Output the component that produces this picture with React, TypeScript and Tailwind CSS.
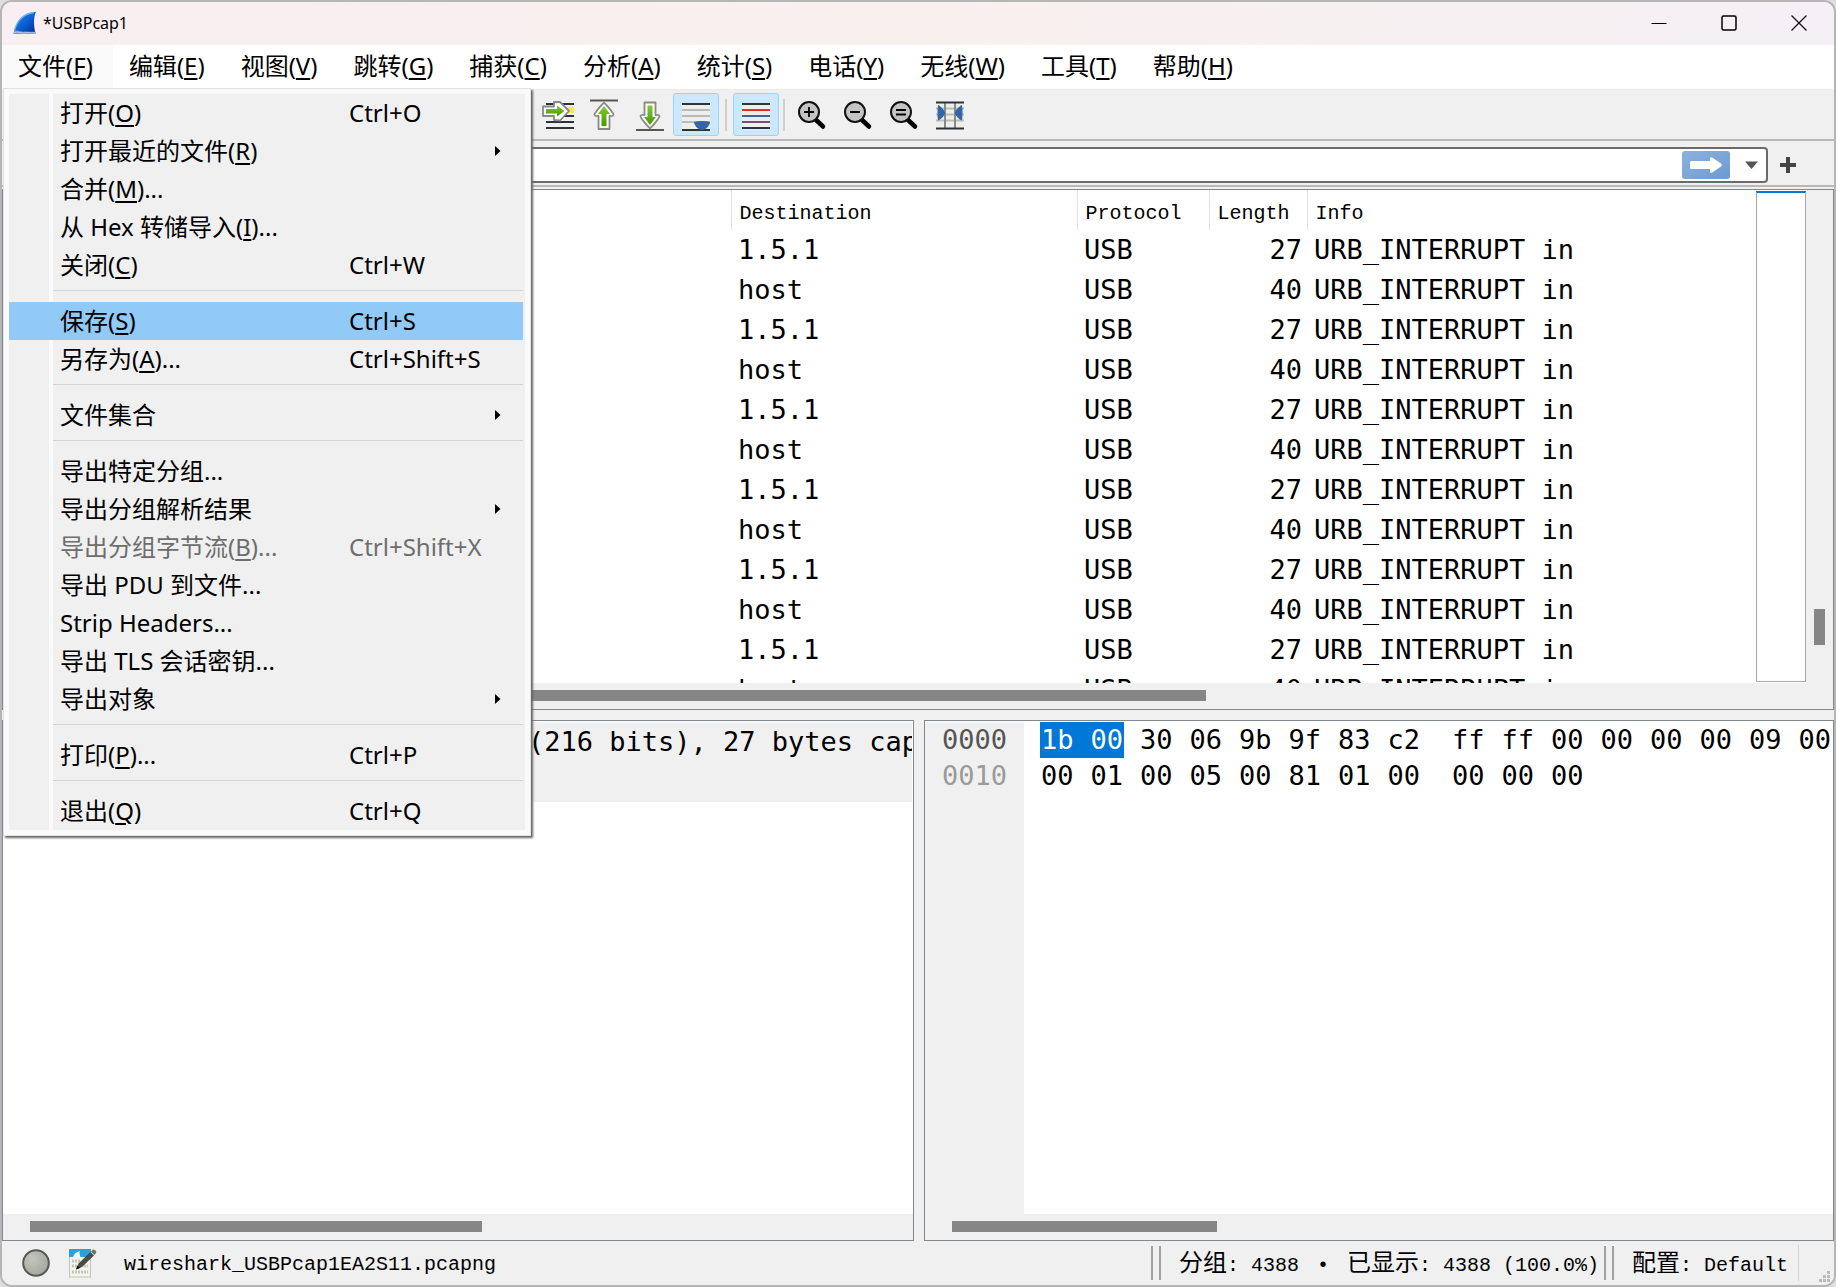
import type { ReactNode } from "react";

type MenuLabel = { text: string; key?: string; tail?: string };
type MenuEntry = MenuLabel & { shortcut?: string; sub?: boolean; disabled?: boolean; active?: boolean };

const menus: MenuLabel[] = [
  { text: "文件", key: "F" },
  { text: "编辑", key: "E" },
  { text: "视图", key: "V" },
  { text: "跳转", key: "G" },
  { text: "捕获", key: "C" },
  { text: "分析", key: "A" },
  { text: "统计", key: "S" },
  { text: "电话", key: "Y" },
  { text: "无线", key: "W" },
  { text: "工具", key: "T" },
  { text: "帮助", key: "H" },
];

const fileMenu: MenuEntry[][] = [
  [
    { text: "打开", key: "O", shortcut: "Ctrl+O" },
    { text: "打开最近的文件", key: "R", sub: true },
    { text: "合并", key: "M", tail: "..." },
    { text: "从 Hex 转储导入", key: "I", tail: "..." },
    { text: "关闭", key: "C", shortcut: "Ctrl+W" },
  ],
  [
    { text: "保存", key: "S", shortcut: "Ctrl+S", active: true },
    { text: "另存为", key: "A", tail: "...", shortcut: "Ctrl+Shift+S" },
  ],
  [{ text: "文件集合", sub: true }],
  [
    { text: "导出特定分组..." },
    { text: "导出分组解析结果", sub: true },
    { text: "导出分组字节流", key: "B", tail: "...", shortcut: "Ctrl+Shift+X", disabled: true },
    { text: "导出 PDU 到文件..." },
    { text: "Strip Headers..." },
    { text: "导出 TLS 会话密钥..." },
    { text: "导出对象", sub: true },
  ],
  [{ text: "打印", key: "P", tail: "...", shortcut: "Ctrl+P" }],
  [{ text: "退出", key: "Q", shortcut: "Ctrl+Q" }],
];

const packets = Array.from({ length: 12 }, (_, i) =>
  i % 2 === 0 ? { dest: "1.5.1", len: 27 } : { dest: "host", len: 40 },
);

const hexRows = [
  { offset: "0000", left: "1b 00 30 06 9b 9f 83 c2", right: "ff ff 00 00 00 00 09 00", selected: 2 },
  { offset: "0010", left: "00 01 00 05 00 81 01 00", right: "00 00 00", selected: 0 },
];

function Label({ text, key_, tail }: { text: string; key_?: string; tail?: string }) {
  return (
    <span className="whitespace-pre">
      {text}
      {key_ && (
        <>
          (<span className="underline decoration-2 underline-offset-[3px]">{key_}</span>)
        </>
      )}
      {tail}
    </span>
  );
}

function TitleBar() {
  return (
    <header className="flex h-[43px] shrink-0 items-center bg-linear-to-r from-[#f9eef1] via-[#f9f0ee] to-[#f5f0f5] pb-[2px] pl-[11px]">
      <svg width="24" height="24" viewBox="0 0 24 24" aria-hidden="true">
        <defs>
          <linearGradient id="fin" x1="0" y1="0" x2="1" y2="1">
            <stop offset="0" stopColor="#3d8fe0" />
            <stop offset="0.5" stopColor="#0c62d6" />
            <stop offset="1" stopColor="#062c8c" />
          </linearGradient>
        </defs>
        <path d="M0.500 22.500C3 11 10 2 23 0.800C20.500 6 20.500 14 22.500 22.500Z" fill="url(#fin)" />
        <path d="M1.500 19.500C4 10 10 2.800 21 1.500" fill="none" stroke="#6fb4f2" strokeWidth="1.300" />
        <path d="M0.500 23L1.300 19.800C5 18.800 8 21.200 12 20.600C16 20 18 21.400 22.300 20.500L22.600 23Z" fill="#6f95d2" />
        <path d="M1 21.500C5 20.300 8 22.400 12 21.800C16 21.200 19 22.400 22.400 21.800" fill="none" stroke="#b5cdf0" />
      </svg>
      <h1 className="ml-[6px] flex-1 text-[16px] leading-6">*USBPcap1</h1>
      <button type="button" aria-label="最小化" className="flex h-full w-[70px] items-center justify-center">
        <svg width="16" height="16" viewBox="0 0 16 16" aria-hidden="true"><path d="M0.500 8.500H15.500" stroke="#000" /></svg>
      </button>
      <button type="button" aria-label="最大化" className="flex h-full w-[70px] items-center justify-center">
        <svg width="16" height="16" viewBox="0 0 16 16" aria-hidden="true"><rect x="1" y="1" width="14" height="14" rx="1.500" fill="none" stroke="#000" strokeWidth="1.500" /></svg>
      </button>
      <button type="button" aria-label="关闭" className="flex h-full w-[70px] items-center justify-center">
        <svg width="16" height="16" viewBox="0 0 16 16" aria-hidden="true"><path d="M0.500 0.500L15.500 15.500M15.500 0.500L0.500 15.500" stroke="#111" strokeWidth="1.300" /></svg>
      </button>
    </header>
  );
}

function FileMenu() {
  return (
    <div className="absolute top-[43px] left-[1px] z-10 w-[528px] border border-[#e2e2e2] bg-[#fafafa] p-[5px] shadow-[2px_2px_2px_#666]">
      <div className="bg-[linear-gradient(to_right,#f0f0f0_0,#f0f0f0_40px,#fafafa_40px,#fafafa_44px,#f0f0f0_44px)]">
        {fileMenu.map((group, g) => (
          <div key={g}>
            {g > 0 && (
              <div className="h-[18px] pt-[6px] pr-[2px] pl-11">
                <hr className="border-[#d5d5d5]" />
              </div>
            )}
            {group.map((e) => (
              <button
                key={e.text}
                type="button"
                disabled={e.disabled}
                className={
                  "grid h-[38px] w-[514px] grid-cols-[289px_1fr_28px] items-center pl-[51px] text-left " +
                  (e.active ? "bg-[#91c9f7]" : e.disabled ? "text-[#6d6d6d]" : "")
                }
              >
                <Label text={e.text} key_={e.key} tail={e.tail} />
                <span>{e.shortcut}</span>
                {e.sub && (
                  <svg width="6" height="10" viewBox="0 0 6 10" aria-hidden="true"><path d="M0 0L5.500 5L0 10Z" fill="#000" /></svg>
                )}
              </button>
            ))}
          </div>
        ))}
      </div>
    </div>
  );
}

function MenuBar() {
  return (
    <nav className="relative flex h-11 shrink-0 bg-white text-[24px] leading-[38px]">
      {menus.map((m, i) => (
        <button key={m.text} type="button" className={"pr-5 pb-[3px] pl-4 " + (i === 0 ? "bg-[#fafafa]" : "")}>
          <Label text={m.text} key_={m.key} />
        </button>
      ))}
      <FileMenu />
    </nav>
  );
}

function Tool({ label, on, children }: { label: string; on?: boolean; children: ReactNode }) {
  return (
    <button
      type="button"
      aria-label={label}
      className={
        "flex h-[43px] w-[46px] items-center justify-center rounded-[3px] border " +
        (on ? "border-[#99d1ff] bg-[#cce8ff]" : "border-transparent")
      }
    >
      <svg width="34" height="34" viewBox="0 0 34 34" aria-hidden="true">{children}</svg>
    </button>
  );
}

function Magnifier({ mark }: { mark: string }) {
  return (
    <>
      <path d="M20 21L28 28.500" stroke="#000" strokeWidth="4.500" strokeLinecap="round" />
      <circle cx="14" cy="14" r="10" fill="#c4c4c4" stroke="#111" strokeWidth="2" />
      <path d={mark} stroke="#000" strokeWidth="1.800" />
    </>
  );
}

function ToolBar() {
  return (
    <div className="flex h-[50px] shrink-0 items-center border-t border-[#ececec] bg-[#f0f0f0] pl-[533px]">
      <svg width="0" height="0" className="absolute" aria-hidden="true">
        <defs>
          <linearGradient id="leaf" x1="0" y1="0" x2="0" y2="1">
            <stop offset="0" stopColor="#82cc2e" />
            <stop offset="1" stopColor="#479a00" />
          </linearGradient>
        </defs>
      </svg>
      <Tool label="转到分组">
        <path d="M5 6H33M5 18H33M5 24H33M5 30H33" stroke="#2e3436" strokeWidth="2" />
        <rect x="22" y="9" width="11" height="6" fill="#fce94f" />
        <path d="M2 8.500H13V4L19 4L28 13L19 22.500L13 22V18H2Z" fill="#fff" stroke="#888a85" strokeWidth="1.800" strokeLinejoin="round" />
        <path d="M5 11H16V7.500L23.500 13L16 18.500V15.500H5Z" fill="url(#leaf)" />
      </Tool>
      <Tool label="首个分组">
        <path d="M3 2.500H31" stroke="#555753" strokeWidth="2" />
        <path d="M17 5C18 5 27 15.500 26.500 17C26 18.500 22.500 18 22.500 18V31H11.500V18C11.500 18 8 18.500 7.500 17C7 15.500 16 5 17 5Z" fill="#fff" stroke="#888a85" strokeWidth="1.800" strokeLinejoin="round" />
        <path d="M17 8L23 16H19.500V28H14.500V16H11Z" fill="url(#leaf)" />
      </Tool>
      <Tool label="最新分组">
        <path d="M3 32H31" stroke="#555753" strokeWidth="2" />
        <path d="M17 30C18 30 27 19.500 26.500 18C26 16.500 22.500 17 22.500 17V4.500H11.500V17C11.500 17 8 16.500 7.500 18C7 19.500 16 30 17 30Z" fill="#fff" stroke="#888a85" strokeWidth="1.800" strokeLinejoin="round" />
        <path d="M17 27L23 19H19.500V7.500H14.500V19H11Z" fill="url(#leaf)" />
      </Tool>
      <Tool label="自动滚动" on>
        <rect x="3" y="6" width="28" height="26" fill="#eeeeec" />
        <path d="M3 6H31M3 32H31" stroke="#2e3436" strokeWidth="2" />
        <path d="M3 12H31M3 18H31M3 24H31" stroke="#babdb6" strokeWidth="2" />
        <path d="M15 24C20 22.500 26 22.500 31 24C31 27 27 32 23 32C19 32 15 27 15 24Z" fill="#3465a4" />
      </Tool>
      <div className="mx-[6px] h-8 w-[2px] bg-[#d0d0d0]" />
      <Tool label="着色" on>
        <rect x="3" y="6" width="28" height="26" fill="#eeeeec" />
        <path d="M3 6H31M3 30H31" stroke="#2e3436" strokeWidth="2" />
        <path d="M3 12H31" stroke="#ef2929" strokeWidth="2" />
        <path d="M3 18H31" stroke="#3465a4" strokeWidth="2" />
        <path d="M3 24H31" stroke="#75507b" strokeWidth="2" />
      </Tool>
      <div className="mx-1 h-8 w-[2px] bg-[#d0d0d0]" />
      <Tool label="放大"><Magnifier mark="M9 14H19M14 9V19" /></Tool>
      <Tool label="缩小"><Magnifier mark="M9 14H19" /></Tool>
      <Tool label="正常大小"><Magnifier mark="M9 12H19M9 16.500H19" /></Tool>
      <Tool label="调整列宽">
        <rect x="3" y="4" width="28" height="27" fill="#eeeeec" />
        <path d="M3 10.500H31M3 16.500H31M3 22.500H31" stroke="#babdb6" strokeWidth="2" />
        <path d="M12 4V31M22 4V31" stroke="#888a85" strokeWidth="2" />
        <path d="M3 4.500H31M3 30.500H31" stroke="#2e3436" strokeWidth="2" />
        <path d="M5 7C8 8 12 13 12 15C12 17 8 21.500 5 22.500C4.300 17 4.300 12 5 7ZM29 7C26 8 22 13 22 15C22 17 26 21.500 29 22.500C29.700 17 29.700 12 29 7Z" fill="#3465a4" />
      </Tool>
    </div>
  );
}

function FilterBar() {
  return (
    <div className="flex h-12 shrink-0 items-center border-t-2 border-b-2 border-[#b8b8b8] bg-[#f0f0f0] pt-[3px] pl-1">
      <div className="flex h-9 min-w-0 flex-1 items-center rounded-[4px] border-2 border-[#6a6a6a] bg-white pr-2">
        <input aria-label="显示过滤器" className="h-full min-w-0 flex-1 px-2 text-[24px] outline-none" />
        <button type="button" aria-label="应用" className="flex h-7 w-12 items-center justify-center rounded-[3px] bg-linear-to-br from-[#8cb2de] to-[#6c9bd0]">
          <svg width="32" height="16" viewBox="0 0 32 16" aria-hidden="true">
            <path d="M1.500 4H20V1.500C20 0 21.500 0 22.500 0.800L31 6.500C32 7.500 32 8.500 31 9.500L22.500 15.200C21.500 16 20 16 20 14.500V12H1.500C0.500 12 0 11.500 0 10.500V5.500C0 4.500 0.500 4 1.500 4Z" fill="#fff" />
          </svg>
        </button>
        <button type="button" aria-label="历史" className="ml-[15px] flex h-7 w-[13px] items-center">
          <svg width="13" height="8" viewBox="0 0 13 8" aria-hidden="true"><path d="M0 0.500H13L6.500 8Z" fill="#555" /></svg>
        </button>
      </div>
      <button type="button" aria-label="添加" className="mr-[38px] ml-3 flex h-7 w-4 items-center">
        <svg width="16" height="16" viewBox="0 0 16 16" aria-hidden="true"><path d="M8 0V16M0 8H16" stroke="#444" strokeWidth="4" /></svg>
      </button>
    </div>
  );
}

function PacketList() {
  const th = "h-10 border-l border-[#e2e2e2] p-0 pt-2 pl-2 text-left font-[Liberation_Mono] text-[20px] leading-8 font-normal";
  return (
    <section className="flex min-h-0 flex-[520] flex-col border border-[#828790] bg-white">
      <div className="flex min-h-0 flex-1">
        <div className="min-w-0 flex-1 overflow-hidden">
          <table className="w-full table-fixed border-collapse font-[DejaVu_Sans_Mono] text-[27px] leading-10">
            <colgroup>
              <col className="w-[728px]" />
              <col className="w-[346px]" />
              <col className="w-[132px]" />
              <col className="w-[98px]" />
              <col />
            </colgroup>
            <thead>
              <tr>
                <td className="h-10 p-0" />
                <th className={th}>Destination</th>
                <th className={th}>Protocol</th>
                <th className={th}>Length</th>
                <th className={th}>Info</th>
              </tr>
            </thead>
            <tbody>
              {packets.map((p, i) => (
                <tr key={i} className="h-10">
                  <td className="p-0" />
                  <td className="p-0 pl-[7px]">{p.dest}</td>
                  <td className="p-0 pl-[7px]">USB</td>
                  <td className="p-0 pr-[5px] text-right">{p.len}</td>
                  <td className="p-0 pl-[7px] whitespace-nowrap">URB_INTERRUPT in</td>
                </tr>
              ))}
            </tbody>
          </table>
        </div>
        <div className="my-px w-[50px] border border-t-2 border-[#a8a8a8] border-t-[#0078d7]" />
        <div className="w-[27px] bg-[#f0f0f0] pt-[419px] pl-[8px]">
          <div className="h-9 w-[11px] bg-[#868686]" />
        </div>
      </div>
      <div className="h-[26px] bg-[#f0f0f0] pt-[7px] pl-[27px]">
        <div className="h-[11px] w-[1176px] bg-[#868686]" />
      </div>
    </section>
  );
}

function DetailPane() {
  return (
    <section className="flex w-[912px] shrink-0 flex-col border border-[#828790] bg-white">
      <div className="mx-px mt-px h-20 overflow-hidden bg-[#f0f0f0] pl-[524px] font-[DejaVu_Sans_Mono] text-[27px] leading-10 whitespace-nowrap">
        (216 bits), 27 bytes cap
      </div>
      <div className="flex-1" />
      <div className="h-[26px] bg-[#f0f0f0] pt-[7px] pl-[27px]">
        <div className="h-[11px] w-[452px] bg-[#868686]" />
      </div>
    </section>
  );
}

function HexPane() {
  return (
    <section className="flex min-w-0 flex-1 flex-col overflow-hidden border border-[#828790] bg-white pt-px font-[DejaVu_Sans_Mono] text-[27px] leading-9">
      <div className="flex flex-1">
        <div className="w-[99px] shrink-0 bg-[#f0f0f0] pl-[17px]">
          {hexRows.map((r, i) => (
            <div key={r.offset} className={i === 0 ? "text-[#555555]" : "text-[#9a9a9a]"}>{r.offset}</div>
          ))}
        </div>
        <div className="pl-4">
          {hexRows.map((r) => (
            <div key={r.offset} className="relative flex gap-4">
              {r.selected > 0 && <div className="absolute top-0 left-0 h-9 w-[84px] bg-[#0078d7]" />}
              <div className="relative grid w-[396px] grid-cols-8">
                {r.left.split(" ").map((b, i) => (
                  <span key={i} className={"pl-px " + (i < r.selected ? "text-white" : "")}>{b}</span>
                ))}
              </div>
              <div className="grid w-[396px] grid-cols-8">
                {r.right.split(" ").map((b, i) => (
                  <span key={i}>{b}</span>
                ))}
              </div>
            </div>
          ))}
        </div>
      </div>
      <div className="h-[26px] bg-[#f0f0f0] pt-[7px] pl-[27px]">
        <div className="h-[11px] w-[265px] bg-[#868686]" />
      </div>
    </section>
  );
}

function StatusBar() {
  const bars = "h-[34px] w-[10px] border-x-2 border-[#a0a0a0]";
  return (
    <footer className="relative flex h-11 shrink-0 items-center bg-[#f0f0f0] pl-5 font-[Liberation_Mono,Noto_Sans_CJK_SC] text-[20px] leading-6">
      <button type="button" aria-label="专家信息">
        <svg width="28" height="28" viewBox="0 0 28 28" aria-hidden="true">
          <defs>
            <radialGradient id="led" cx="0.35" cy="0.35" r="0.8">
              <stop offset="0" stopColor="#c2c4be" />
              <stop offset="1" stopColor="#a0a39b" />
            </radialGradient>
          </defs>
          <circle cx="14" cy="14" r="12.800" fill="url(#led)" stroke="#555a58" strokeWidth="2" />
        </svg>
      </button>
      <button type="button" aria-label="捕获文件注释" className="ml-[19px]">
        <svg width="28" height="30" viewBox="0 0 28 30" aria-hidden="true">
          <rect x="0.500" y="1.500" width="21" height="27.500" fill="#f4f4ec" stroke="#c2c4bb" />
          <rect x="0" y="1" width="22" height="8" fill="#2f9fdb" />
          <path d="M4 9C5 6 7 4 11 3C10 5 10.500 7 11.500 9Z" fill="#fff" />
          <path d="M3 13H12M3 18H9M15 18H19M3 24H19" stroke="#c4c4b8" strokeWidth="3" strokeDasharray="2 1" />
          <path d="M7 21.500L9.500 15.500L21.500 4L25 7.500L13 19Z" fill="#4a4d48" />
          <path d="M7 21.500L8.500 17.500L11 20Z" fill="#111" />
          <path d="M22 3.500L24 1.500C25 0.800 28 3.500 27.200 4.800L25.500 7Z" fill="#6d706b" />
        </svg>
      </button>
      <span className="ml-[27px] flex-1 pt-1 whitespace-nowrap">wireshark_USBPcap1EA2S11.pcapng</span>
      <div className={bars} />
      <span className="w-[443px] pt-1 pl-[18px] whitespace-pre">
        <span className="text-[24px]">分组</span>: 4388 <span className="inline-block w-6 text-center">•</span> <span className="text-[24px]">已显示</span>: 4388 (100.0%)
      </span>
      <div className={bars} />
      <span className="w-[184px] pt-1 pl-[18px] whitespace-pre">
        <span className="text-[24px]">配置</span>: Default
      </span>
      <div className="mr-[35px] h-9 w-px bg-[#d5d5d5]" />
      <svg className="absolute right-[3px] bottom-[3px]" width="12" height="12" viewBox="0 0 12 12" aria-hidden="true">
        <path d="M0 9H3V12H0ZM4 9H7V12H4ZM8 9H11V12H8ZM4 5H7V8H4ZM8 5H11V8H8ZM8 1H11V4H8Z" fill="#bbb" />
      </svg>
    </footer>
  );
}

export default function App() {
  return (
    <div className="h-screen bg-[#dedede] font-[Noto_Sans,Noto_Sans_CJK_SC,sans-serif] text-black">
      <div className="flex h-full flex-col overflow-hidden rounded-xl border-2 border-[#b5b5b5] bg-[#f0f0f0]">
        <TitleBar />
        <MenuBar />
        <ToolBar />
        <FilterBar />
        <main className="flex min-h-0 flex-1 flex-col gap-[10px] pt-[2px]">
          <PacketList />
          <div className="flex min-h-0 flex-[522] gap-[10px]">
            <DetailPane />
            <HexPane />
          </div>
        </main>
        <StatusBar />
      </div>
    </div>
  );
}
